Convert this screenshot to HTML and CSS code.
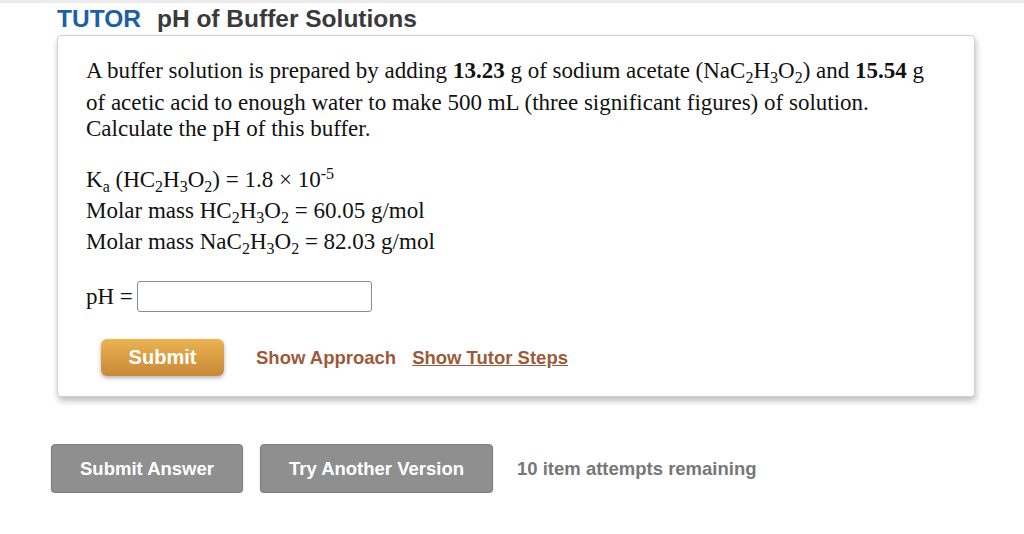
FILE: index.html
```html
<!DOCTYPE html>
<html>
<head>
<meta charset="utf-8">
<link rel="stylesheet" href="styles.css">
</head>
<body>
<div class="topbar"></div>
<div class="page">
  <h1 class="title"><span class="tutor">TUTOR</span><span class="name">pH of Buffer Solutions</span></h1>
  <div class="card">
    <p class="q">A buffer solution is prepared by adding <b>13.23</b> g of sodium acetate (NaC<sub>2</sub>H<sub>3</sub>O<sub>2</sub>) and <b>15.54</b> g of acetic acid to enough water to make 500 mL (three significant figures) of solution. Calculate the pH of this buffer.</p>
    <p class="q data">K<sub>a</sub> (HC<sub>2</sub>H<sub>3</sub>O<sub>2</sub>) = 1.8 × 10<sup>-5</sup><br>Molar mass HC<sub>2</sub>H<sub>3</sub>O<sub>2</sub> = 60.05 g/mol<br>Molar mass NaC<sub>2</sub>H<sub>3</sub>O<sub>2</sub> = 82.03 g/mol</p>
    <div class="answer"><span class="q">pH =</span><span class="input"></span></div>
    <div class="actions">
      <span class="submit">Submit</span>
      <span class="link">Show Approach</span>
      <span class="link underline">Show Tutor Steps</span>
    </div>
  </div>
  <div class="bottom">
    <span class="gbtn w1">Submit Answer</span>
    <span class="gbtn w2">Try Another Version</span>
    <span class="remain">10 item attempts remaining</span>
  </div>
</div>
</body>
</html>
```

FILE: styles.css
```css
html, body {
  margin: 0;
  padding: 0;
  background: #fff;
}
.topbar {
  height: 3px;
  background: #ececec;
}
.page {
  padding-left: 57px;
  width: 918px;
}
.title {
  margin: 2px 0 2px 0;
  font-family: "Liberation Sans", Arial, sans-serif;
  font-weight: bold;
  font-size: 24.5px;
  line-height: 28px;
  display: flex;
  gap: 16px;
}
.tutor { color: #1d5ea8; }
.name { color: #3a3a3a; }
.card {
  border: 1px solid #cfcfcf;
  border-radius: 4px;
  box-shadow: 1px 4px 6px rgba(0,0,0,0.25);
  padding: 22px 28px 20px 28px;
  background: #fff;
}
.q {
  font-family: "Liberation Serif", "Times New Roman", serif;
  font-size: 23px;
  line-height: 26px;
  color: #111;
  margin: 0 0 26px 0;
}
.q sub, .q sup {
  font-size: 16px;
  line-height: 24px;
}
.q sub { vertical-align: -5px; }
.q sup { vertical-align: 8px; line-height: 0; }
.data { line-height: 24px; margin-bottom: 20px; }
.answer {
  display: flex;
  align-items: center;
  gap: 4px;
}
.answer .q { margin: 0; }
.input {
  width: 233px;
  height: 29px;
  border: 1px solid #8a8a8a;
  border-radius: 3px;
  display: inline-block;
}
.actions {
  display: flex;
  align-items: center;
  margin-top: 27px;
  margin-left: 15px;
  font-family: "Liberation Sans", Arial, sans-serif;
  font-weight: bold;
}
.submit {
  width: 123px;
  height: 37px;
  border-radius: 6px;
  background: linear-gradient(#ebb352, #c98838);
  color: #fff;
  font-size: 20px;
  display: flex;
  align-items: center;
  justify-content: center;
  box-shadow: 0 2px 4px rgba(0,0,0,0.3);
  margin-right: 32px;
}
.link {
  color: #9d5a3b;
  font-size: 18.5px;
  margin-right: 16px;
}
.underline { text-decoration: underline; }
.bottom {
  display: flex;
  align-items: center;
  margin-top: 47px;
  margin-left: -6px;
  gap: 17px;
  font-family: "Liberation Sans", Arial, sans-serif;
  font-weight: bold;
}
.gbtn {
  height: 47px;
  border: 1px solid #7d7d7d;
  border-radius: 4px;
  background: #8f8f8f;
  color: #fff;
  font-size: 18.5px;
  display: flex;
  align-items: center;
  justify-content: center;
  box-shadow: 0 1px 2px rgba(0,0,0,0.2);
}
.w1 { width: 190px; }
.w2 { width: 231px; }
.remain {
  color: #777;
  font-size: 18.5px;
  margin-left: 7px;
}
```
